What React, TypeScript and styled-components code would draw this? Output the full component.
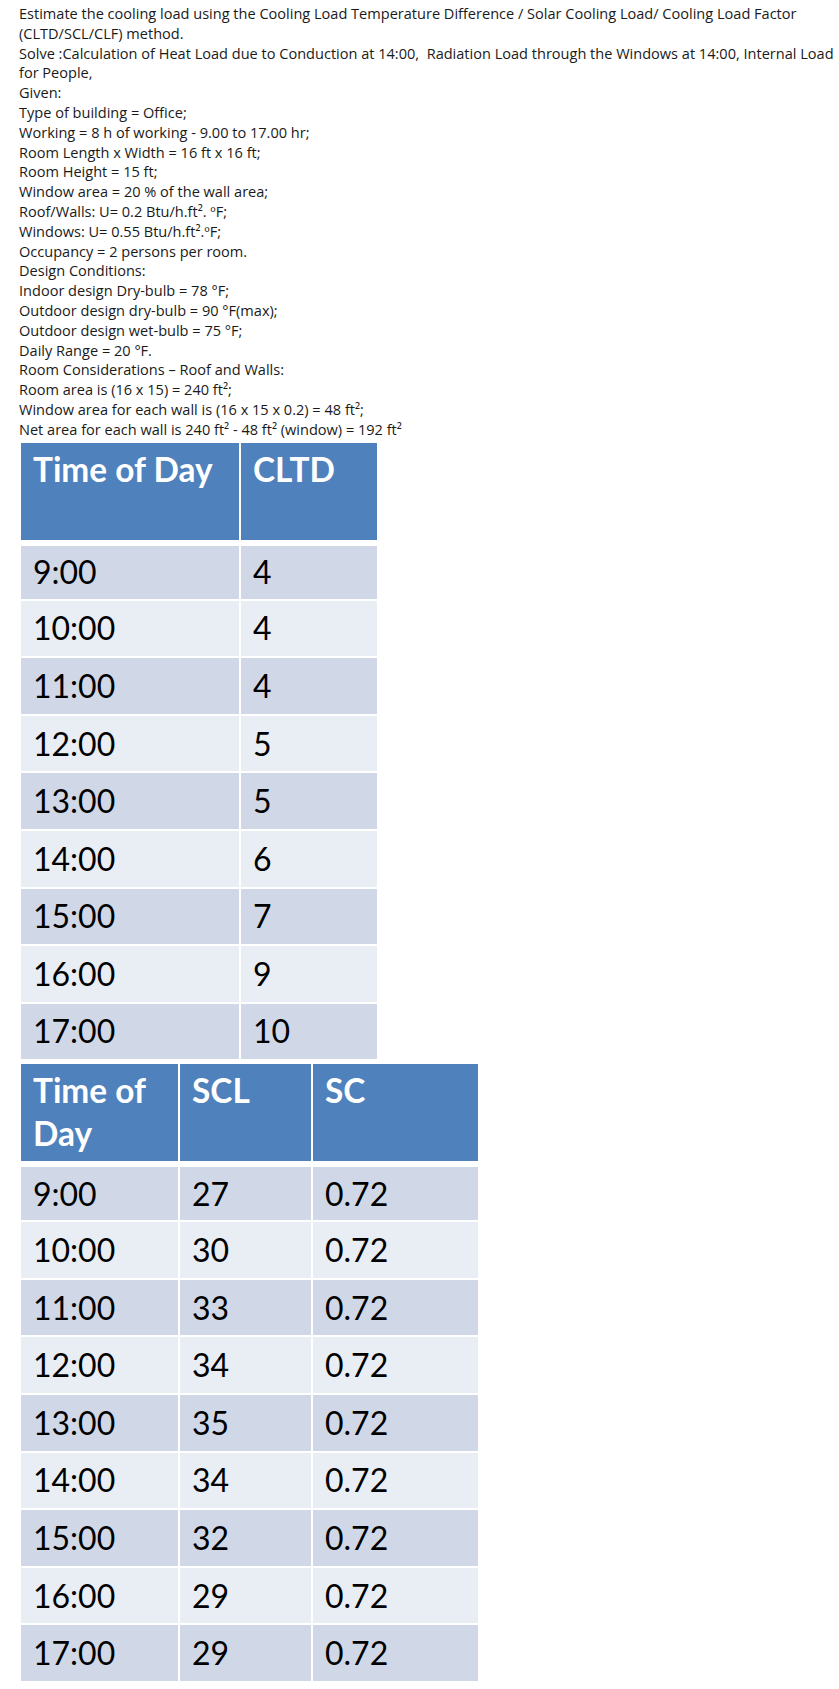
import React from "react";
import styled, { createGlobalStyle } from "styled-components";

const GlobalStyle = createGlobalStyle`
  html, body {
    margin: 0;
    padding: 0;
    background: #ffffff;
  }
`;

const Page = styled.main`
  padding: 4px 0 0 19px;
  display: flex;
  flex-direction: column;
  align-items: flex-start;
`;

const Problem = styled.section`
  font-family: "Open Sans", "Noto Sans", sans-serif;
  font-size: 14.55px;
  line-height: 19.8px;
  letter-spacing: 0;
  color: #1a1a1a;
  margin-bottom: 1px;
`;

const Line = styled.div`
  white-space: pre;
`;

const DataTable = styled.table<{ $width: number; $gapAfter?: number }>`
  border-collapse: separate;
  border-spacing: 2px;
  table-layout: fixed;
  width: ${(p) => p.$width}px;
  margin-left: 0;
  margin-bottom: ${(p) => p.$gapAfter ?? 0}px;
  font-family: Lato, "Open Sans", sans-serif;
  font-size: 32px;
`;

const HeadRow = styled.tr`
  height: 101px;
`;

const HeadCell = styled.th<{ $w: number }>`
  box-sizing: border-box;
  width: ${(p) => p.$w}px;
  background: #4f81bd;
  color: #ffffff;
  font-size: 33.4px;
  font-weight: 700;
  text-align: left;
  vertical-align: top;
  line-height: 43px;
  padding: 5px 8px 0 12px;
  border-bottom: 4px solid #ffffff;
`;

const BodyRow = styled.tr<{ $first?: boolean }>`
  height: ${(p) => (p.$first ? 53 : 55.6)}px;
`;

const BodyCell = styled.td<{ $odd: boolean }>`
  box-sizing: border-box;
  background: ${(p) => (p.$odd ? "#d0d8e8" : "#e9edf4")};
  color: #000000;
  font-weight: 400;
  line-height: 40px;
  vertical-align: middle;
  padding: 0 10px 0 12px;
  white-space: nowrap;
`;

const problemLines = [
  "Estimate the cooling load using the Cooling Load Temperature Difference / Solar Cooling Load/ Cooling Load Factor",
  "(CLTD/SCL/CLF) method.",
  "Solve :Calculation of Heat Load due to Conduction at 14:00,  Radiation Load through the Windows at 14:00, Internal Load",
  "for People,",
  "Given:",
  "Type of building = Office;",
  "Working = 8 h of working - 9.00 to 17.00 hr;",
  "Room Length x Width = 16 ft x 16 ft;",
  "Room Height = 15 ft;",
  "Window area = 20 % of the wall area;",
  "Roof/Walls: U= 0.2 Btu/h.ft². ºF;",
  "Windows: U= 0.55 Btu/h.ft².ºF;",
  "Occupancy = 2 persons per room.",
  "Design Conditions:",
  "Indoor design Dry-bulb = 78 °F;",
  "Outdoor design dry-bulb = 90 °F(max);",
  "Outdoor design wet-bulb = 75 °F;",
  "Daily Range = 20 °F.",
  "Room Considerations – Roof and Walls:",
  "Room area is (16 x 15) = 240 ft²;",
  "Window area for each wall is (16 x 15 x 0.2) = 48 ft²;",
  "Net area for each wall is 240 ft² - 48 ft² (window) = 192 ft²",
];

const cltd: [string, string][] = [
  ["9:00", "4"],
  ["10:00", "4"],
  ["11:00", "4"],
  ["12:00", "5"],
  ["13:00", "5"],
  ["14:00", "6"],
  ["15:00", "7"],
  ["16:00", "9"],
  ["17:00", "10"],
];

const scl: [string, string, string][] = [
  ["9:00", "27", "0.72"],
  ["10:00", "30", "0.72"],
  ["11:00", "33", "0.72"],
  ["12:00", "34", "0.72"],
  ["13:00", "35", "0.72"],
  ["14:00", "34", "0.72"],
  ["15:00", "32", "0.72"],
  ["16:00", "29", "0.72"],
  ["17:00", "29", "0.72"],
];

type TableProps = {
  headers: string[];
  widths: number[];
  rows: string[][];
  gapAfter?: number;
};

function Grid({ headers, widths, rows, gapAfter }: TableProps) {
  const total = widths.reduce((a, b) => a + b, 0) + 2 * (widths.length + 1);
  return (
    <DataTable $width={total} $gapAfter={gapAfter}>
      <thead>
        <HeadRow>
          {headers.map((h, i) => (
            <HeadCell key={h} $w={widths[i]}>
              {h}
            </HeadCell>
          ))}
        </HeadRow>
      </thead>
      <tbody>
        {rows.map((r, ri) => (
          <BodyRow key={r[0]} $first={ri === 0}>
            {r.map((c, ci) => (
              <BodyCell key={ci} $odd={ri % 2 === 0}>
                {c}
              </BodyCell>
            ))}
          </BodyRow>
        ))}
      </tbody>
    </DataTable>
  );
}

export default function App() {
  return (
    <>
      <GlobalStyle />
      <Page>
        <Problem>
          {problemLines.map((l) => (
            <Line key={l}>{l}</Line>
          ))}
        </Problem>
        <Grid
          headers={["Time of Day", "CLTD"]}
          widths={[218, 136]}
          rows={cltd}
          gapAfter={1}
        />
        <Grid
          headers={["Time of Day", "SCL", "SC"]}
          widths={[157, 131, 165]}
          rows={scl}
        />
      </Page>
    </>
  );
}
